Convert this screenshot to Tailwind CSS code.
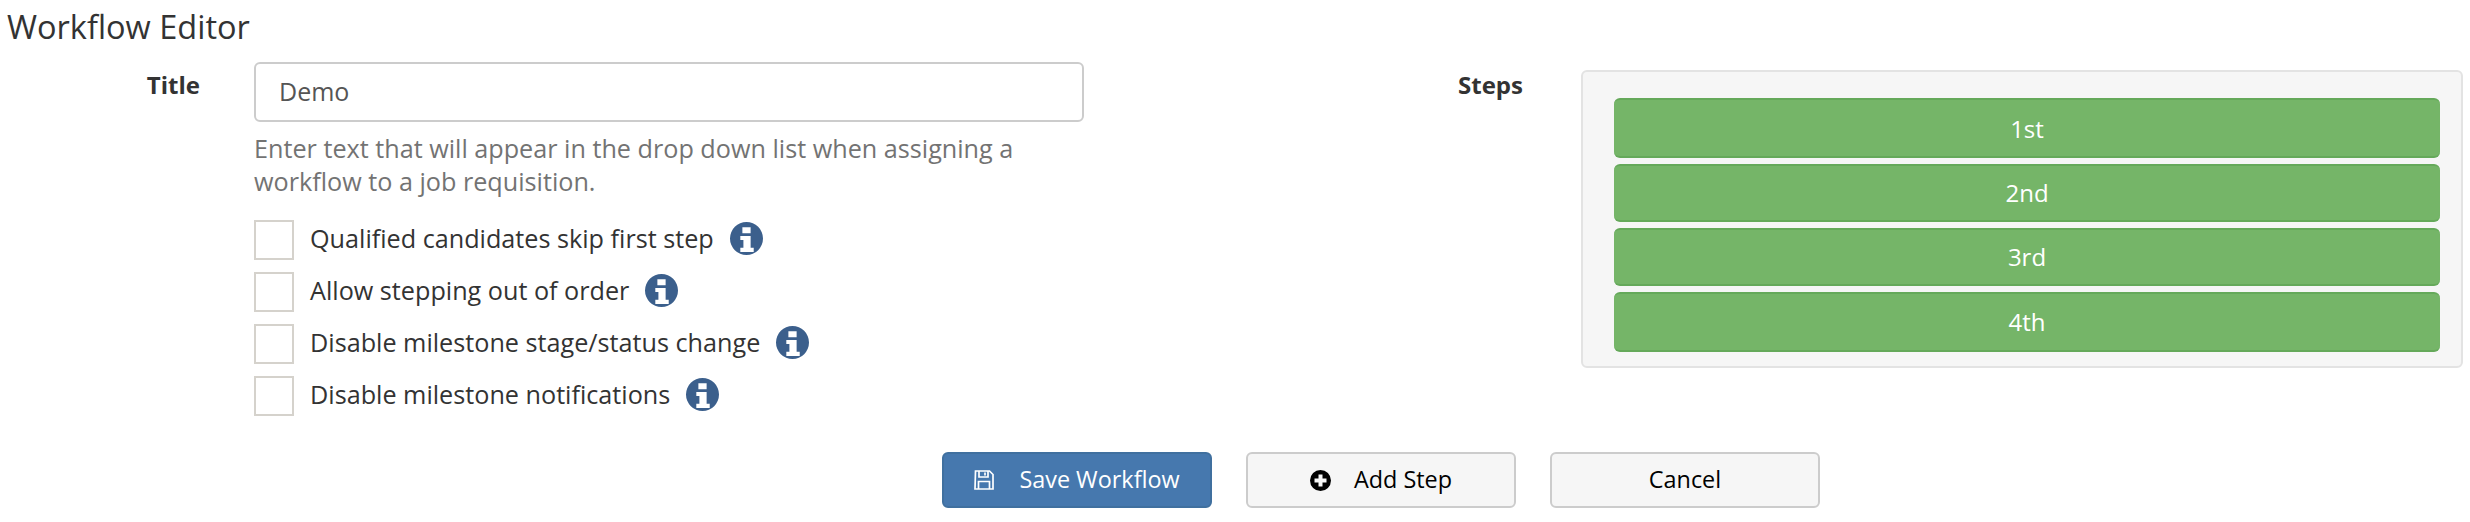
<!DOCTYPE html>
<html lang="en">

<head>
    <meta charset="UTF-8">
    <title>Workflow Editor</title>
    <script src="https://cdn.jsdelivr.net/npm/@tailwindcss/browser@4"></script>
</head>

<body class="bg-white font-['Open_Sans',sans-serif] text-[#333] overflow-hidden">
    <div class="w-[2470px] h-[522px]">
        <h1 class="pl-[7px] pt-[5px] h-[62px] text-[32.500px] leading-[44px] font-normal">Workflow Editor</h1>

        <div class="flex h-[390px]">
            <!-- Left column -->
            <div class="w-[1458px] flex shrink-0">
                <label class="w-[254px] pr-[54px] pt-[6px] text-right text-[24px] leading-[34px] font-bold">Title</label>
                <div class="w-[830px]">
                    <input type="text" value="Demo"
                        class="block w-full h-[60px] px-[23px] pb-[2px] bg-white border-2 border-[#ccc] rounded-[6px] text-[25px] text-[#555]">
                    <p class="mt-[10px] w-[800px] text-[25.200px] leading-[33px] text-[#737373]">Enter text that will appear in the drop down list when assigning a workflow to a job requisition.</p>
                    <div class="mt-[22px] flex flex-col gap-[12px]">
                        <div class="flex items-center h-[40px]">
                            <span class="w-[40px] h-[40px] border-2 border-[#d5d2cc] bg-white"></span>
                            <span class="ml-[16px] mb-[3px] text-[25.200px]">Qualified candidates skip first step</span>
                            <svg class="ml-[16px] mb-[4px]" width="33" height="33" viewBox="0 0 32 32"><path fill-rule="evenodd" fill="#3b5f8c" d="M16 0a16 16 0 1 0 0 32a16 16 0 1 0 0-32zM12 5h8v6h-8zM10 13.500h10v11.500h3v4h-13v-4h3v-7.500h-3z"/></svg>
                        </div>
                        <div class="flex items-center h-[40px]">
                            <span class="w-[40px] h-[40px] border-2 border-[#d5d2cc] bg-white"></span>
                            <span class="ml-[16px] mb-[3px] text-[25.200px]">Allow stepping out of order</span>
                            <svg class="ml-[16px] mb-[4px]" width="33" height="33" viewBox="0 0 32 32"><path fill-rule="evenodd" fill="#3b5f8c" d="M16 0a16 16 0 1 0 0 32a16 16 0 1 0 0-32zM12 5h8v6h-8zM10 13.500h10v11.500h3v4h-13v-4h3v-7.500h-3z"/></svg>
                        </div>
                        <div class="flex items-center h-[40px]">
                            <span class="w-[40px] h-[40px] border-2 border-[#d5d2cc] bg-white"></span>
                            <span class="ml-[16px] mb-[3px] text-[25.200px]">Disable milestone stage/status change</span>
                            <svg class="ml-[16px] mb-[4px]" width="33" height="33" viewBox="0 0 32 32"><path fill-rule="evenodd" fill="#3b5f8c" d="M16 0a16 16 0 1 0 0 32a16 16 0 1 0 0-32zM12 5h8v6h-8zM10 13.500h10v11.500h3v4h-13v-4h3v-7.500h-3z"/></svg>
                        </div>
                        <div class="flex items-center h-[40px]">
                            <span class="w-[40px] h-[40px] border-2 border-[#d5d2cc] bg-white"></span>
                            <span class="ml-[16px] mb-[3px] text-[25.200px]">Disable milestone notifications</span>
                            <svg class="ml-[16px] mb-[4px]" width="33" height="33" viewBox="0 0 32 32"><path fill-rule="evenodd" fill="#3b5f8c" d="M16 0a16 16 0 1 0 0 32a16 16 0 1 0 0-32zM12 5h8v6h-8zM10 13.500h10v11.500h3v4h-13v-4h3v-7.500h-3z"/></svg>
                        </div>
                    </div>
                </div>
            </div>

            <!-- Steps -->
            <div class="flex flex-1">
                <label class="w-[123px] pt-[6px] text-[24px] leading-[34px] font-bold">Steps</label>
                <div class="mt-[8px] w-[882px] h-[298px] pt-[26px] pl-[31px] pr-[21px] bg-[#f6f6f6] border-2 border-[#e3e3e3] rounded-[6px] flex flex-col gap-[6px]">
                    <div class="h-[60px] pt-[1px] flex items-center justify-center bg-[#75b568] border-y-2 border-[#65a95a] rounded-[6px] text-white text-[24px]">1st</div>
                    <div class="h-[58px] flex items-center justify-center bg-[#75b568] border-y-2 border-[#65a95a] rounded-[6px] text-white text-[24px]">2nd</div>
                    <div class="h-[58px] flex items-center justify-center bg-[#75b568] border-y-2 border-[#65a95a] rounded-[6px] text-white text-[24px]">3rd</div>
                    <div class="h-[60px] pb-[1px] flex items-center justify-center bg-[#75b568] border-y-2 border-[#65a95a] rounded-[6px] text-white text-[24px]">4th</div>
                </div>
            </div>
        </div>

        <!-- Buttons -->
        <div class="ml-[942px] flex gap-[34px]">
            <button class="w-[270px] h-[56px] flex items-center justify-center gap-[25px] bg-[#4678ae] border-2 border-[#40709f] rounded-[6px] text-white text-[23.400px]">
                <svg width="20" height="20" viewBox="0 0 20 20" fill="none" stroke="#fff" stroke-width="1.700"><path d="M1.500 1h14l3.500 3.500v14.500h-18zM5 1v6h9v-6M11 2.500v3M4.500 19v-7.500h11v7.500"/></svg>
                <span>Save Workflow</span>
            </button>
            <button class="w-[270px] h-[56px] flex items-center justify-center gap-[23px] bg-[#f6f6f6] border-2 border-[#ccc] rounded-[6px] text-black text-[23.400px]">
                <svg width="21" height="21" viewBox="0 0 21 21"><path fill-rule="evenodd" fill="#000" d="M10.500 0a10.500 10.500 0 1 0 0 21a10.500 10.500 0 1 0 0-21zM8.500 4.500h4v4h4v4h-4v4h-4v-4h-4v-4h4z"/></svg>
                <span>Add Step</span>
            </button>
            <button class="w-[270px] h-[56px] bg-[#f6f6f6] border-2 border-[#ccc] rounded-[6px] text-black text-[23.400px]">Cancel</button>
        </div>
    </div>
</body>

</html>
